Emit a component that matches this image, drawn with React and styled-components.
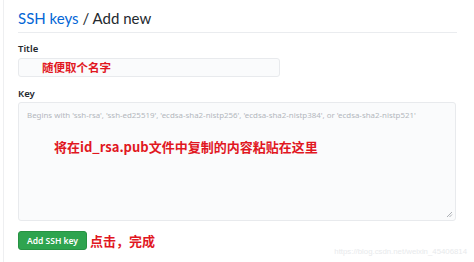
import React from "react";
import styled, { createGlobalStyle } from "styled-components";

const GlobalStyle = createGlobalStyle`
  html, body {
    margin: 0;
    padding: 0;
    background: #fff;
  }
  body {
    font-family: "Noto Sans", "Open Sans", "Noto Sans CJK SC", sans-serif;
    color: #24292e;
  }
`;

const Page = styled.div`
  width: 474px;
  height: 262px;
  position: relative;
  overflow: hidden;
  background: #fff;
`;

const Content = styled.div`
  margin-left: 3px;
  border-left: 1px solid #eeeff1;
  padding: 7px 17px 0 14px;
  height: 262px;
  box-sizing: border-box;
`;

const Header = styled.h2`
  margin: 0;
  padding-bottom: 3px;
  border-bottom: 1px solid #eaecef;
  font-family: Lato, "Noto Sans", sans-serif;
  font-size: 15px;
  font-weight: 400;
  line-height: 22px;
  color: #24292e;

  a {
    color: #0366d6;
    text-decoration: none;
  }
`;

const Field = styled.div`
  display: flex;
  flex-direction: column;
  margin-top: ${(p) => p.$top || 0}px;
`;

const Label = styled.label`
  font-size: 9.5px;
  font-weight: 600;
  line-height: 12px;
  margin-bottom: ${(p) => p.$gap || 3}px;
`;

const Note = styled.span`
  font-family: "Noto Sans CJK SC", "Noto Sans", sans-serif;
  font-weight: 700;
  color: #e1171f;
  font-size: ${(p) => p.$size || 13}px;
  line-height: 1;
`;

const Input = styled.div`
  width: 262px;
  height: 19px;
  box-sizing: border-box;
  background: #fafbfc;
  border: 1px solid #e8eaed;
  border-radius: 3px;
  display: flex;
  align-items: center;
  padding-left: 23px;
`;

const TextArea = styled.div`
  position: relative;
  width: 438px;
  height: 119px;
  box-sizing: border-box;
  background: #fafbfc;
  border: 1px solid #e8eaed;
  border-radius: 3px;
  padding: 6px 8px;
`;

const Placeholder = styled.div`
  font-size: 7.9px;
  color: #b3b7bc;
  line-height: 12px;
  white-space: nowrap;
`;

const PasteNote = styled.div`
  margin: 14px 0 0 27px;
`;

const Grip = styled.svg`
  position: absolute;
  right: 2px;
  bottom: 2px;
`;

const Actions = styled.div`
  display: flex;
  align-items: center;
  gap: 3px;
  margin-top: 10px;
`;

const Button = styled.button`
  height: 19px;
  width: 69px;
  border: 1px solid #279243;
  border-radius: 3px;
  background: #2ea44f;
  color: #fff;
  font-family: "Noto Sans", sans-serif;
  font-size: 8.5px;
  font-weight: 600;
  padding: 0;
`;

const Watermark = styled.div`
  position: absolute;
  right: 7px;
  bottom: 6px;
  font-family: "Liberation Sans", sans-serif;
  font-size: 7.8px;
  color: #e8eaec;
`;

export default function App() {
  return (
    <Page>
      <GlobalStyle />
      <Content>
        <Header>
          <a href="#">SSH keys</a> / Add new
        </Header>
        <Field $top={10}>
          <Label>Title</Label>
          <Input>
            <Note $size={11.5}>随便取个名字</Note>
          </Input>
        </Field>
        <Field $top={11}>
          <Label $gap={2}>Key</Label>
          <TextArea>
            <Placeholder>
              Begins with 'ssh-rsa', 'ssh-ed25519', 'ecdsa-sha2-nistp256', 'ecdsa-sha2-nistp384', or 'ecdsa-sha2-nistp521'
            </Placeholder>
            <PasteNote>
              <Note $size={13}>将在id_rsa.pub文件中复制的内容粘贴在这里</Note>
            </PasteNote>
            <Grip width="7" height="7" viewBox="0 0 7 7">
              <path d="M1 6L6 1M3.5 6L6 3.5" stroke="#9a9ea3" strokeWidth="0.8" />
            </Grip>
          </TextArea>
        </Field>
        <Actions>
          <Button>Add SSH key</Button>
          <Note $size={13}>点击，完成</Note>
        </Actions>
      </Content>
      <Watermark>https://blog.csdn.net/weixin_45406814</Watermark>
    </Page>
  );
}
